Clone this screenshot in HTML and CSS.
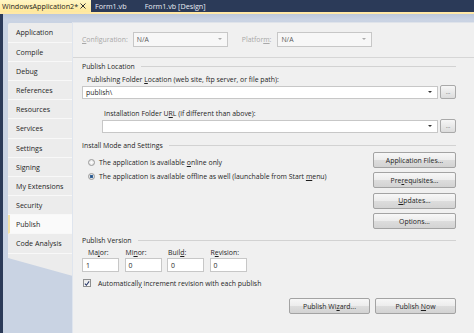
FILE: index.html
```html
<!DOCTYPE html>
<html lang="en">
<head>
    <meta charset="UTF-8">
    <title>WindowsApplication2 - Publish</title>
    <link rel="stylesheet" href="styles.css">
</head>
<body>
    <div class="tabbar">
        <div class="tab active">
            <span>WindowsApplication2*</span>
            <svg class="close" width="6" height="6" viewBox="0 0 6 6"><path d="M0.5 0.5 L5.5 5.5 M5.5 0.5 L0.5 5.5" stroke="#333" stroke-width="1"/></svg>
        </div>
        <div class="tab">Form1.vb</div>
        <div class="tab">Form1.vb [Design]</div>
    </div>
    <div class="accent"></div>

    <div class="frame">
        <div class="sidebar">
            <div class="nav-item">Application</div>
            <div class="nav-item">Compile</div>
            <div class="nav-item">Debug</div>
            <div class="nav-item">References</div>
            <div class="nav-item">Resources</div>
            <div class="nav-item">Services</div>
            <div class="nav-item">Settings</div>
            <div class="nav-item">Signing</div>
            <div class="nav-item">My Extensions</div>
            <div class="nav-item">Security</div>
            <div class="nav-item selected">Publish</div>
            <div class="nav-item">Code Analysis</div>
            <div class="nav-tail"></div>
        </div>

        <div class="panel">
            <div class="config-row">
                <span class="muted"><u>C</u>onfiguration:</span>
                <div class="combo disabled config">N/A<span class="arrow"></span></div>
                <span class="muted platform-label">Platfor<u>m</u>:</span>
                <div class="combo disabled platform">N/A<span class="arrow"></span></div>
            </div>

            <div class="content">
                <div class="group-title">Publish Location</div>
                <div class="label first">Publishing Folder <u>L</u>ocation (web site, ftp server, or file path):</div>
                <div class="path-row">
                    <div class="combo path">publish\<span class="arrow"></span></div>
                    <button class="dots">...</button>
                </div>
                <div class="label indent">Installation Folder U<u>R</u>L (if different than above):</div>
                <div class="path-row indent-row">
                    <div class="combo path"><span class="arrow"></span></div>
                    <button class="dots">...</button>
                </div>

                <div class="group-title install">Install Mode and Settings</div>
                <div class="install-grid">
                    <div class="radios">
                        <div class="radio-row"><span class="radio"></span><span>The application is available <u>o</u>nline only</span></div>
                        <div class="radio-row"><span class="radio checked"></span><span>The application is available offline as well (launchable from Start <u>m</u>enu)</span></div>
                    </div>
                    <div class="side-buttons">
                        <button class="btn">Application Files...</button>
                        <button class="btn">Pre<u>r</u>equisites...</button>
                        <button class="btn"><u>U</u>pdates...</button>
                        <button class="btn">Options...</button>
                    </div>
                </div>

                <div class="group-title version">Publish Version</div>
                <div class="version-row">
                    <div class="field major"><span>Ma<u>j</u>or:</span><div class="box">1</div></div>
                    <div class="field"><span>Mi<u>n</u>or:</span><div class="box">0</div></div>
                    <div class="field"><span>Buil<u>d</u>:</span><div class="box">0</div></div>
                    <div class="field"><span>R<u>e</u>vision:</span><div class="box">0</div></div>
                </div>
                <div class="check-row">
                    <span class="check">
                        <svg width="7" height="7" viewBox="0 0 7 7"><path d="M1 3.6 L2.8 5.5 L6 1" fill="none" stroke="#2a3a6a" stroke-width="1.2"/></svg>
                    </span>
                    <span>Automaticall<u>y</u> increment revision with each publish</span>
                </div>

                <div class="bottom-buttons">
                    <button class="btn wide">Publish Wi<u>z</u>ard...</button>
                    <button class="btn wide">Publish <u>N</u>ow</button>
                </div>
            </div>
        </div>
    </div>
</body>
</html>
```

FILE: styles.css
```css
:root {
    --navy: #2b3a58;
    --frame: #c9d3e3;
    --panel: #f0f0f0;
    --line: #d2d2d2;
    --text: #1e1e1e;
    --field-border: #c7c7c7;
}

* {
    box-sizing: border-box;
    margin: 0;
    padding: 0;
}

body {
    width: 474px;
    height: 333px;
    overflow: hidden;
    font-family: "Open Sans", "Noto Sans", sans-serif;
    font-size: 6.9px;
    color: var(--text);
    background-color: var(--frame);
}

u {
    text-decoration: underline;
}

/* document tabs */
.tabbar {
    display: flex;
    height: 12px;
    background-color: var(--navy);
    color: #e8ecf4;
    font-size: 7.2px;
}

.tab {
    display: flex;
    align-items: center;
    line-height: 12px;
}

.tab.active {
    width: 91px;
    padding: 0 5px 0 2px;
    justify-content: space-between;
    background: linear-gradient(#fff6c4, #ffe89a);
    color: #1e1e1e;
}

.tab:nth-child(2) {
    margin-left: 4px;
}

.tab:nth-child(3) {
    margin-left: 18px;
}

.accent {
    height: 2px;
    background-color: #ffe8a6;
}

/* frame */
.frame {
    display: flex;
    height: 319px;
    padding-top: 8px;
    border-left: 3px solid var(--navy);
    background: linear-gradient(#bcc8db 0, #cbd4e3 6px, var(--frame) 8px);
}

.sidebar {
    width: 69px;
    margin-top: 1.4px;
    padding-left: 5px;
    display: flex;
    flex-direction: column;
}

.nav-item {
    height: 19.2px;
    line-height: 19.2px;
    padding-left: 8px;
    background-color: #ececec;
    border-bottom: 1px solid #f8f8f8;
    font-size: 7.1px;
}

.nav-item:first-child {
    border-top-left-radius: 2px;
}

.nav-item.selected {
    background-color: #fafafa;
    border-left: 2px solid #f5e3a8;
    padding-left: 6px;
}

.nav-tail {
    height: 22px;
    background-color: #ececec;
    clip-path: polygon(0 0, 100% 0, 100% 100%, 0 20%);
}

.panel {
    flex: 1;
    background-color: var(--panel);
    border-left: 1px solid #dfe5ee;
    border-top: 1px solid #dfe3ea;
}

.config-row {
    display: flex;
    align-items: center;
    height: 35px;
    padding: 0 0 2px 9px;
    border-bottom: 1px solid #d6d6d6;
}

.muted {
    color: #a8a8a8;
}

.combo {
    position: relative;
    height: 13px;
    line-height: 12px;
    padding-left: 3px;
    background-color: #fff;
    border: 1px solid var(--field-border);
}

.combo.disabled {
    background-color: #f7f7f7;
    color: #5a5a5a;
    height: 15px;
    line-height: 14px;
}

.config {
    width: 95px;
    margin-left: 5px;
}

.platform-label {
    margin-left: 14px;
}

.platform {
    width: 95px;
    margin-left: 6px;
}

.arrow {
    position: absolute;
    right: 5px;
    top: 50%;
    margin-top: -1px;
    border-left: 2px solid transparent;
    border-right: 2px solid transparent;
    border-top: 2px solid #333;
}

.disabled .arrow {
    border-top-color: #aaa;
}

.content {
    padding: 3px 18px 0 9px;
}

.group-title {
    display: flex;
    align-items: center;
    gap: 6px;
    height: 10px;
}

.group-title::after {
    content: "";
    flex: 1;
    height: 1px;
    background-color: var(--line);
}

.label {
    margin-top: 4px;
    height: 10px;
    padding-left: 5px;
}

.label.indent {
    margin-top: 10px;
    padding-left: 22px;
}

.path-row {
    display: flex;
    align-items: center;
    gap: 2px;
}

.indent-row {
    padding-left: 20px;
}

.combo.path {
    flex: 1;
}

.dots {
    width: 16px;
    height: 14px;
    font-family: inherit;
    font-size: 6px;
    color: #555;
    border: 1px solid #a9a9a9;
    border-radius: 2px;
    background: linear-gradient(#f6f6f6, #dcdcdc);
}

.group-title.install {
    margin-top: 7px;
}

.install-grid {
    display: flex;
    justify-content: space-between;
    margin-top: 2px;
}

.radios {
    display: flex;
    flex-direction: column;
    gap: 4px;
    padding: 5px 0 0 6px;
}

.radio-row {
    display: flex;
    align-items: center;
    gap: 4px;
    height: 10px;
}

.radio {
    width: 7px;
    height: 7px;
    border-radius: 50%;
    border: 1px solid #9a9a9a;
    background: radial-gradient(#fff, #dcdcdc);
}

.radio.checked {
    background: radial-gradient(#2d4f7a 0, #3a6ea5 1.5px, #e4e4e4 2px);
}

.side-buttons {
    display: flex;
    flex-direction: column;
    gap: 4.4px;
}

.btn {
    width: 83px;
    height: 16px;
    font-family: inherit;
    font-size: 6.9px;
    color: #1e1e1e;
    border: 1px solid #a3a3a3;
    border-radius: 2px;
    background: linear-gradient(#f7f7f7 0, #ececec 50%, #dddddd 51%, #d3d3d3 100%);
}

.group-title.version {
    margin-top: 6px;
}

.version-row {
    display: flex;
    gap: 5.5px;
    padding-top: 3px;
}

.field {
    display: flex;
    flex-direction: column;
    width: 37px;
}

.field span {
    padding-left: 1px;
    height: 10px;
}

.field.major span {
    padding-left: 6px;
}

.box {
    height: 14px;
    line-height: 13px;
    padding-left: 3px;
    background-color: #fff;
    border: 1px solid var(--field-border);
}

.check-row {
    display: flex;
    align-items: center;
    gap: 7px;
    margin-top: 6px;
    padding-left: 1px;
    height: 10px;
}

.check {
    display: flex;
    align-items: center;
    justify-content: center;
    width: 8px;
    height: 8px;
    border: 1px solid #8e8f8f;
    background: linear-gradient(#e9e9e9, #fafafa);
}

.bottom-buttons {
    display: flex;
    justify-content: flex-end;
    gap: 5px;
    margin-top: 10px;
}

.btn.wide {
    width: 81px;
}
```
